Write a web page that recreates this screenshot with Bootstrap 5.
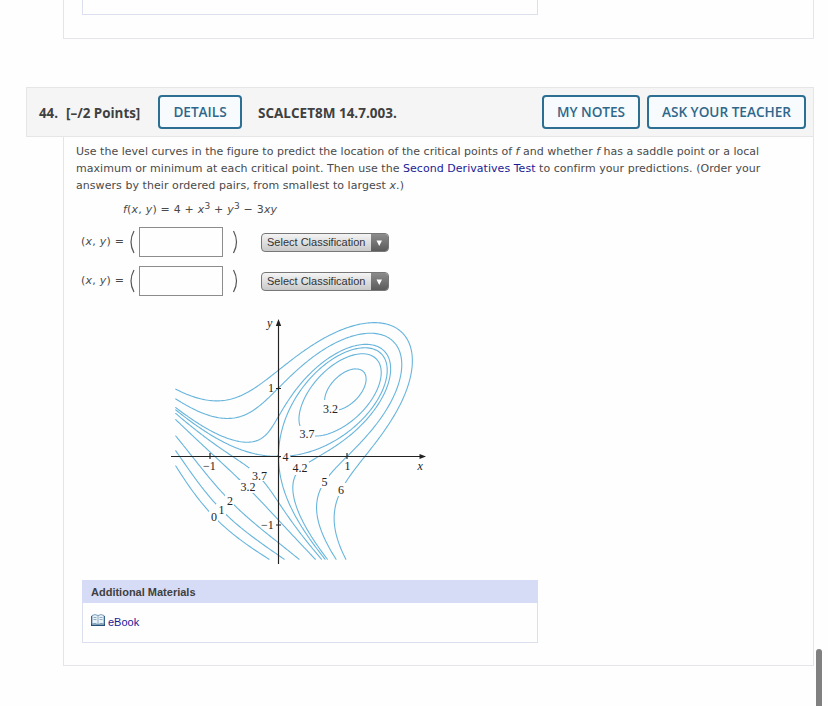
<!DOCTYPE html>
<html lang="en">
<head>
<meta charset="utf-8">
<meta name="viewport" content="width=device-width, initial-scale=1">
<title>SCALCET8M 14.7.003</title>
<link href="https://cdn.jsdelivr.net/npm/bootstrap@5.3.0/dist/css/bootstrap.min.css" rel="stylesheet">
<style>
body{background:#fefefe;color:#4a4a4a;font-family:"DejaVu Sans",sans-serif;height:706px}
.panel{margin-left:63px;width:751px;border:1px solid #e4e4ea;border-top:0}
.prev-panel{height:39px;margin-bottom:48px}
.materials{width:456px;margin-left:18px;border:1px solid #dcdfee}
.prev-panel .materials{height:15px;border-top:0}
.q-head{margin-left:26px;width:788px;height:50px;background:#f5f5f5;border:1px solid #e6e6e6;font:700 14px/20px "Open Sans",sans-serif;color:#404040;padding-left:12px;padding-right:7px}
.q-btn{height:34px;padding:0;border:2px solid #2d6f93;border-radius:4px;background:#f7fbfd;color:#2f678b;font:600 13.6px/30px "Open Sans",sans-serif;--bs-btn-hover-bg:#e6f3f9}
.q-num,.q-points,.q-code{padding-top:2px}
.q-num{font-size:13.3px;width:19px}
.q-points{font-size:13.4px;width:75px;white-space:nowrap}
.q-code{font-size:13.5px}
.b-details{width:84px;margin-left:17px;margin-right:16px}
.b-notes{width:98px;margin-right:7px}
.b-ask{width:159px}
.q-body{height:529px;padding:6px 0 0 12px}
.prompt{font-size:11px;line-height:17px;white-space:nowrap}
.l1{letter-spacing:.015px}
.l2{letter-spacing:.04px}
.l3{letter-spacing:.06px}
.prompt a,.materials a{color:#1a1a96;text-decoration:none}
.formula{font-size:11px;line-height:20px;height:20px;padding-left:47px;margin-top:6px;white-space:nowrap;letter-spacing:.2px}
.formula sup{font-size:9px;top:-.4em}
.answer{height:30px;margin-top:9px;padding-left:5px;font-size:11px;white-space:nowrap}
.first{margin-top:7px}
.lhs{width:48px;letter-spacing:.25px;padding-top:1px}
.paren{width:10px;height:28px}
.answer .form-control{width:84px;height:30px;padding:2px;border:1px solid #8c8c8c;border-radius:0;background:#fefefe}
.paren-r{margin-left:7px}
.picker{width:128px;height:19px;margin-left:21px;padding:0;border:1px solid #777;border-radius:4px;background:linear-gradient(#f4f4f4,#c9c9c9);color:#333;font:11px/17px "Liberation Sans",sans-serif;overflow:hidden}
.picker-text{width:109px;padding-left:5px;text-align:left}
.picker-arrow{width:17px;height:17px;background:linear-gradient(#8c8c8c,#5b5b5b)}
.plot{display:block;width:270px;height:254px;margin:16px 0 0 88px}
.plot text{font-family:"Liberation Serif",serif;font-size:12px;fill:#222}
.q-body .materials{margin:14px 0 0 6px;height:63px;font-family:"Liberation Sans",sans-serif;font-size:11px}
.mat-title{height:23px;margin:-1px -1px 0;padding-left:9px;background:#d6dcf5;font-weight:700;line-height:24px;color:#404040}
.mat-link{padding:11px 0 0 8px;line-height:17px}
.mat-icon{margin-right:3px}
.scroll-thumb{position:fixed;left:816px;top:649px;width:6px;height:60px;border-radius:3px;background:#808080}
</style>
</head>
<body class="overflow-hidden">
<section class="panel prev-panel"><div class="materials"></div></section>
<header class="q-head d-flex align-items-center">
  <span class="q-num">44.</span><span class="q-points ms-2">[–/2 Points]</span>
  <button class="btn q-btn b-details">DETAILS</button>
  <span class="q-code">SCALCET8M 14.7.003.</span>
  <button class="btn q-btn b-notes ms-auto">MY NOTES</button>
  <button class="btn q-btn b-ask">ASK YOUR TEACHER</button>
</header>
<main class="panel q-body">
  <p class="prompt m-0"><span class="l1">Use the level curves in the figure to predict the location of the critical points of <i>f</i> and whether <i>f</i> has a saddle point or a local</span><br><span class="l2">maximum or minimum at each critical point. Then use the <a href="#">Second Derivatives Test</a> to confirm your predictions. (Order your</span><br><span class="l3">answers by their ordered pairs, from smallest to largest <i>x</i>.)</span></p>
  <div class="formula"><i>f</i>(<i>x</i>, <i>y</i>) = 4 + <i>x</i><sup>3</sup> + <i>y</i><sup>3</sup> − 3<i>xy</i></div>
  <div class="answer first d-flex align-items-center">
    <span class="lhs">(<i>x</i>, <i>y</i>) =</span>
    <svg class="paren" viewBox="0 0 10 28"><path d="M5 3Q-1 14 5 25" fill="none" stroke="#555" stroke-width="1.2"/></svg>
    <input class="form-control" aria-label="First critical point">
    <svg class="paren paren-r" viewBox="0 0 10 28"><path d="M3.500 3Q9.500 14 3.500 25" fill="none" stroke="#555" stroke-width="1.2"/></svg>
    <button class="picker d-flex"><span class="picker-text">Select Classification</span><span class="picker-arrow"><svg class="d-block" width="17" height="17"><path d="M5.500 6.500h5.500l-2.750 5.500z" fill="#fff"/></svg></span></button>
  </div>
  <div class="answer d-flex align-items-center">
    <span class="lhs">(<i>x</i>, <i>y</i>) =</span>
    <svg class="paren" viewBox="0 0 10 28"><path d="M5 3Q-1 14 5 25" fill="none" stroke="#555" stroke-width="1.2"/></svg>
    <input class="form-control" aria-label="Second critical point">
    <svg class="paren paren-r" viewBox="0 0 10 28"><path d="M3.500 3Q9.500 14 3.500 25" fill="none" stroke="#555" stroke-width="1.2"/></svg>
    <button class="picker d-flex"><span class="picker-text">Select Classification</span><span class="picker-arrow"><svg class="d-block" width="17" height="17"><path d="M5.500 6.500h5.500l-2.750 5.500z" fill="#fff"/></svg></span></button>
  </div>
  <svg class="plot" viewBox="164 312 270 254" role="img" aria-label="Level curves of f">
    <path id="curves" fill="none" stroke="#68b5dc" stroke-width="1.1" stroke-linecap="round"/>
    <g fill="#fefefe">
      <rect x="321" y="400" width="18" height="15"/><rect x="298" y="426" width="17" height="13"/>
      <rect x="281" y="450" width="9" height="12"/><rect x="291" y="462" width="18" height="13"/>
      <rect x="319" y="475" width="10" height="13"/><rect x="336" y="483" width="10" height="13"/>
      <rect x="249" y="468" width="18" height="13"/><rect x="239" y="480" width="17" height="13"/>
      <rect x="225" y="495" width="9" height="12"/><rect x="216" y="504" width="10" height="11"/><rect x="209" y="510" width="9" height="12"/>
    </g>
    <g stroke="#222" stroke-width="1.15">
      <path d="M278.500 324V564M171 456.500H281M290.500 456.500H422M210 453v6M347 453v6M276 388.500h5M276 525h5"/>
      <path d="M278.500 319l2.700 7h-5.400zM426 456.500l-6.500-2.400v4.800z" fill="#222" stroke="none"/>
    </g>
    <text x="267" y="327" font-style="italic">y</text><text x="417.500" y="470" font-style="italic">x</text>
    <text x="268" y="392">1</text><text x="344.500" y="470">1</text>
    <text x="203" y="470">−1</text><text x="261" y="529">−1</text>
    <text x="323" y="413">3.2</text><text x="299.500" y="438">3.7</text>
    <text x="282.500" y="460.500">4</text><text x="292.500" y="472">4.2</text>
    <text x="321.500" y="485.500">5</text><text x="338" y="494">6</text>
    <text x="252" y="479.500">3.7</text><text x="240.500" y="491">3.2</text>
    <text x="227" y="505">2</text><text x="218.500" y="514">1</text><text x="211" y="521">0</text>
  </svg>
  <div class="materials">
    <div class="mat-title">Additional Materials</div>
    <div class="mat-link d-flex"><svg class="mat-icon" width="14" height="13" viewBox="0 0 14 13"><path d="M0 2h1v8.500h12V2h1v10H0z" fill="#24517a"/><path d="M1 1.500Q4-.3 7 1.500Q10-.3 13 1.500V10Q10 8.500 7 10.500Q4 8.500 1 10z" fill="#e9f2f8" stroke="#5d87a6" stroke-width=".8"/><path d="M7 1.500v9M2.500 3.500h3M2.500 5.500h3M8.500 3.500h3M8.500 5.500h3" stroke="#7899b0" stroke-width=".8"/></svg><a href="#">eBook</a></div>
  </div>
</main>
<div class="scroll-thumb"></div>
<script src="https://cdn.jsdelivr.net/npm/bootstrap@5.3.0/dist/js/bootstrap.bundle.min.js"></script>
<script>
// Trace level curves of f(x, y) = 4 + x^3 + y^3 - 3xy with marching squares.
const f = (x, y) => 4 + x*x*x + y*y*y - 3*x*y;
const lo = -1.5, hi = 2.1, n = 144, h = (hi - lo) / n;
const px = x => (278.5 + 68.5 * x).toFixed(2), py = y => (456.5 - 68.5 * y).toFixed(2);
let d = '';
for (const level of [0, 1, 2, 3.2, 3.7, 4.0001, 4.2, 5, 6])
  for (let i = 0; i < n; i++)
    for (let j = 0; j < n; j++) {
      const x = lo + i*h, y = lo + j*h;
      const c = [[x, y], [x+h, y], [x+h, y+h], [x, y+h]], v = c.map(p => f(p[0], p[1]) - level), pts = [];
      for (let k = 0; k < 4; k++) {
        const m = (k + 1) % 4;
        if ((v[k] < 0) !== (v[m] < 0)) {
          const t = v[k] / (v[k] - v[m]);
          pts.push(px(c[k][0] + t*(c[m][0]-c[k][0])) + ' ' + py(c[k][1] + t*(c[m][1]-c[k][1])));
        }
      }
      for (let k = 0; k + 1 < pts.length; k += 2) d += 'M' + pts[k] + 'L' + pts[k+1];
    }
document.getElementById('curves').setAttribute('d', d);
</script>
</body>
</html>
